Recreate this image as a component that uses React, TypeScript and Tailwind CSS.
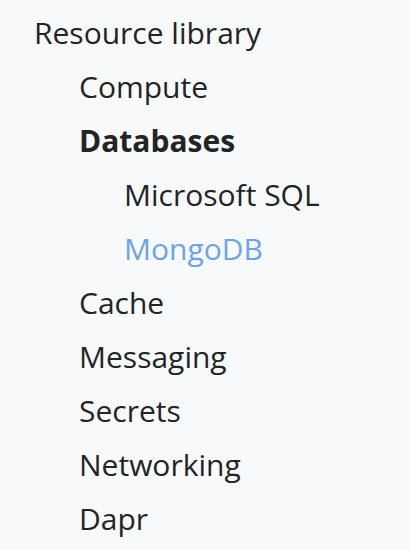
const items: { label: string; level: number; bold?: boolean; active?: boolean }[] = [
  { label: 'Resource library', level: 0 },
  { label: 'Compute', level: 1 },
  { label: 'Databases', level: 1, bold: true },
  { label: 'Microsoft SQL', level: 2 },
  { label: 'MongoDB', level: 2, active: true },
  { label: 'Cache', level: 1 },
  { label: 'Messaging', level: 1 },
  { label: 'Secrets', level: 1 },
  { label: 'Networking', level: 1 },
  { label: 'Dapr', level: 1 },
]

const indent = ['pl-[34px]', 'pl-[79px]', 'pl-[124px]']

export default function App() {
  return (
    <div className="h-[550px] w-[410px] bg-[#f8f9fb] pt-[6px] font-['Open_Sans',sans-serif]">
      <nav>
        <ul className="flex flex-col">
          {items.map((item) => (
            <li
              key={item.label}
              className={`${indent[item.level]} h-[54px] text-[30px] leading-[54px] ${
                item.bold ? 'font-bold' : 'font-normal'
              } ${item.active ? 'text-[#6ea3ea]' : 'text-[#222426]'}`}
            >
              {item.label}
            </li>
          ))}
        </ul>
      </nav>
    </div>
  )
}
